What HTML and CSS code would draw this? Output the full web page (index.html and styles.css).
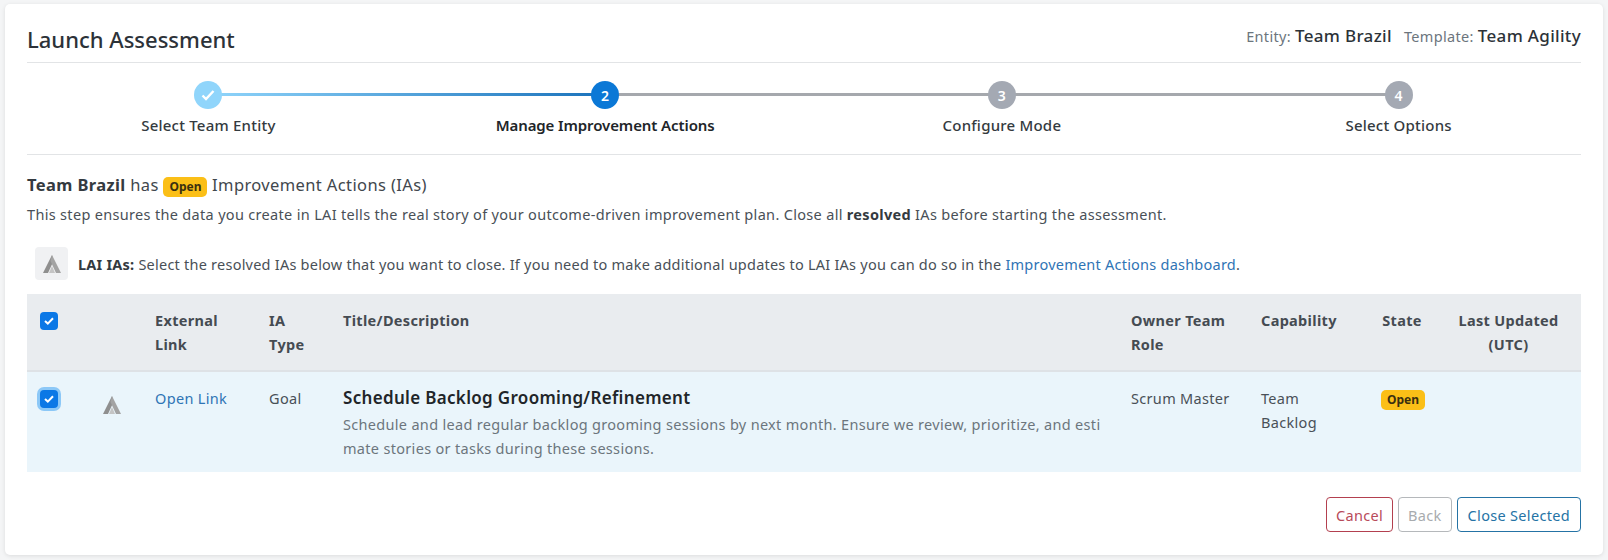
FILE: index.html
```html
<!DOCTYPE html>
<html lang="en">
<head>
  <meta charset="UTF-8">
  <title>Launch Assessment</title>
  <link rel="stylesheet" href="styles.css">
</head>
<body>
  <div class="card">
    <!-- Header -->
    <div class="card-header">
      <h1>Launch Assessment</h1>
      <div class="meta">
        <span class="meta-label">Entity:</span> <span class="meta-value">Team Brazil</span>
        <span class="meta-label meta-gap">Template:</span> <span class="meta-value">Team Agility</span>
      </div>
    </div>

    <!-- Stepper -->
    <div class="stepper">
      <div class="step done">
        <div class="step-circle">
          <svg width="14" height="12" viewBox="0 0 14 12"><path d="M1.5 6.5 L5 10 L12.5 2" fill="none" stroke="#fff" stroke-width="2.4"/></svg>
        </div>
        <div class="step-label">Select Team Entity</div>
      </div>
      <div class="step active">
        <div class="step-circle">2</div>
        <div class="step-label">Manage Improvement Actions</div>
      </div>
      <div class="step">
        <div class="step-circle">3</div>
        <div class="step-label">Configure Mode</div>
      </div>
      <div class="step">
        <div class="step-circle">4</div>
        <div class="step-label">Select Options</div>
      </div>
    </div>

    <!-- Intro -->
    <h2 class="intro-title"><b>Team Brazil</b> has <span class="badge">Open</span> Improvement Actions (IAs)</h2>
    <p class="intro-text">This step ensures the data you create in LAI tells the real story of your outcome-driven improvement plan. Close all <b>resolved</b> IAs before starting the assessment.</p>

    <div class="note">
      <div class="logo-box">
        <svg class="logo" width="18" height="18" viewBox="0 0 18 18"><path d="M9 0 L0 18 H5 L10.5 6 Z" fill="#8f8f8f"/><path d="M9 0 L18 18 H13 L7.5 6 Z" fill="#a3a3a3"/><path d="M9 11 L12 18 H6 Z" fill="#c4c4c4"/></svg>
      </div>
      <div><b>LAI IAs:</b> Select the resolved IAs below that you want to close. If you need to make additional updates to LAI IAs you can do so in the <a href="#">Improvement Actions dashboard</a>.</div>
    </div>

    <!-- Table -->
    <table class="ia-table">
      <colgroup>
        <col class="col-check"><col class="col-logo"><col class="col-link"><col class="col-type"><col class="col-title"><col class="col-owner"><col class="col-cap"><col class="col-state"><col class="col-updated">
      </colgroup>
      <thead>
        <tr>
          <th><span class="checkbox"><svg width="10" height="8" viewBox="0 0 10 8"><path d="M1 4 L3.8 6.6 L9 1.2" fill="none" stroke="#fff" stroke-width="2"/></svg></span></th>
          <th></th>
          <th>External Link</th>
          <th>IA Type</th>
          <th>Title/Description</th>
          <th>Owner Team Role</th>
          <th>Capability</th>
          <th class="center">State</th>
          <th class="center">Last Updated (UTC)</th>
        </tr>
      </thead>
      <tbody>
        <tr>
          <td><span class="checkbox focused"><svg width="10" height="8" viewBox="0 0 10 8"><path d="M1 4 L3.8 6.6 L9 1.2" fill="none" stroke="#fff" stroke-width="2"/></svg></span></td>
          <td class="logo-cell"><svg class="logo" width="18" height="18" viewBox="0 0 18 18"><path d="M9 0 L0 18 H5 L10.5 6 Z" fill="#8f8f8f"/><path d="M9 0 L18 18 H13 L7.5 6 Z" fill="#a3a3a3"/><path d="M9 11 L12 18 H6 Z" fill="#c4c4c4"/></svg></td>
          <td><a href="#">Open Link</a></td>
          <td>Goal</td>
          <td>
            <div class="ia-title">Schedule Backlog Grooming/Refinement</div>
            <div class="ia-desc">Schedule and lead regular backlog grooming sessions by next month. Ensure we review, prioritize, and esti<br>mate stories or tasks during these sessions.</div>
          </td>
          <td>Scrum Master</td>
          <td>Team<br>Backlog</td>
          <td class="center"><span class="badge">Open</span></td>
          <td></td>
        </tr>
      </tbody>
    </table>

    <div class="actions">
      <button class="btn btn-cancel">Cancel</button>
      <button class="btn btn-back">Back</button>
      <button class="btn btn-close">Close Selected</button>
    </div>
  </div>
</body>
</html>
```

FILE: styles.css
```css
* {
  margin: 0;
  padding: 0;
  box-sizing: border-box;
  font-family: 'Noto Sans', 'Open Sans', sans-serif;
}

body {
  background: #f4f5f6;
  height: 560px;
  overflow: hidden;
  padding: 4px 5px;
  color: #495057;
  font-size: 14.5px;
  letter-spacing: 0.32px;
}

.card {
  background: #fff;
  height: 551px;
  border-radius: 5px;
  padding: 0 22px;
  box-shadow: 0 1px 4px rgba(0, 0, 0, 0.1);
}

.card-header {
  height: 59px;
  display: flex;
  justify-content: space-between;
  align-items: flex-end;
  padding-bottom: 8px;
  border-bottom: 1px solid #e2e4e6;
}

h1 {
  font-size: 22px;
  font-weight: 500;
  color: #2c3238;
  line-height: 30px;
  letter-spacing: 0;
}

.meta {
  line-height: 30px;
  position: relative;
  top: -3px;
}

.meta-label {
  color: #6c757d;
  font-size: 14.5px;
}

.meta-gap {
  margin-left: 8px;
}

.meta-value {
  font-size: 17px;
  font-weight: 500;
  color: #2c3238;
}

.stepper {
  display: flex;
  margin: 0 -16px 0 -17px;
  height: 92px;
  padding-top: 18px;
  position: relative;
}

.stepper::after {
  content: '';
  position: absolute;
  left: 17px;
  right: 16px;
  bottom: 0;
  height: 1px;
  background: #e2e4e6;
}

.step {
  flex: 1;
  display: flex;
  flex-direction: column;
  align-items: center;
  position: relative;
}

.step-circle {
  width: 28px;
  height: 28px;
  border-radius: 50%;
  background: #a4a9b3;
  color: #fff;
  font-size: 14px;
  font-weight: 600;
  display: flex;
  align-items: center;
  justify-content: center;
  z-index: 1;
}

.step-label {
  margin-top: 6px;
  font-size: 15px;
  font-weight: 500;
  letter-spacing: 0.22px;
  color: #343a40;
  line-height: 20px;
}

.step:not(:last-child)::after {
  content: '';
  position: absolute;
  top: 12px;
  left: 50%;
  width: 100%;
  height: 3px;
  background: #a5a8ad;
}

.step.done .step-circle {
  background: #90d5fb;
}

.step.done::after {
  background: linear-gradient(90deg, #90d5fb, #1a72bb);
}

.step.active .step-circle {
  background: #0b78d6;
}

.step.active .step-label {
  font-weight: 600;
  letter-spacing: -0.1px;
  color: #212529;
}

.intro-title {
  margin-top: 18px;
  font-size: 16.5px;
  font-weight: 400;
  line-height: 24px;
  letter-spacing: 0.38px;
  color: #41474d;
}

.intro-title b {
  font-weight: 700;
  color: #343a40;
}

.badge {
  display: inline-block;
  background: #fbbf17;
  color: #3a2f10;
  font-size: 12px;
  font-weight: 700;
  line-height: 20px;
  padding: 0 6px;
  border-radius: 5px;
  letter-spacing: 0;
}

.intro-text {
  margin-top: 7px;
  line-height: 20px;
}

.intro-text b, .note b {
  color: #343a40;
}

.note {
  display: flex;
  align-items: center;
  gap: 10px;
  margin: 23px 0 14px 8px;
  letter-spacing: 0.23px;
}

.note a, .ia-table a {
  color: #2f74b5;
  text-decoration: none;
}

.logo-box {
  width: 33px;
  height: 33px;
  background: #f0f1f3;
  border-radius: 4px;
  display: flex;
  align-items: center;
  justify-content: center;
}

.ia-table {
  width: 100%;
  table-layout: fixed;
  border-collapse: collapse;
}

.col-check { width: 58px; }
.col-logo { width: 57px; }
.col-link { width: 114px; }
.col-type { width: 74px; }
.col-title { width: 788px; }
.col-owner { width: 130px; }
.col-cap { width: 120px; }
.col-state { width: 68px; }

.ia-table th {
  background: #e9ecef;
  border-bottom: 2px solid #dee2e6;
  text-align: left;
  vertical-align: top;
  font-size: 14.5px;
  font-weight: 700;
  color: #454b52;
  line-height: 24px;
  height: 76px;
  padding: 14px 13px;
}

.ia-table td {
  background: #eaf5fb;
  vertical-align: top;
  line-height: 24px;
  height: 101px;
  padding: 14px 13px 10px;
}

.ia-table .center {
  text-align: center;
}

.checkbox {
  width: 18px;
  height: 18px;
  background: #0b78e6;
  border-radius: 4px;
  display: flex;
  align-items: center;
  justify-content: center;
  margin-top: 4px;
}

.ia-table .logo-cell {
  padding-left: 18px;
  padding-top: 24px;
}

.checkbox.focused {
  box-shadow: 0 0 0 3px #8cc8f7;
  margin-top: 4px;
}

.ia-title {
  margin-top: 1px;
  font-size: 17px;
  font-weight: 600;
  color: #212529;
  line-height: 22px;
}

.ia-desc {
  margin-top: 3px;
  font-size: 14.5px;
  letter-spacing: 0.31px;
  color: #6c757d;
  line-height: 24px;
}

.actions {
  display: flex;
  justify-content: flex-end;
  gap: 5px;
  margin-top: 25px;
}

.btn {
  background: #fff;
  border: 1px solid;
  border-radius: 4px;
  font-size: 14.5px;
  letter-spacing: 0.32px;
  height: 35px;
  padding: 0 9px;
}

.btn-cancel {
  border-color: #b3404f;
  color: #b84a5a;
}

.btn-back {
  border-color: #b5b8bb;
  color: #a8abae;
}

.btn-close {
  border-color: #2573a5;
  color: #2573a5;
  padding: 0 10px;
}
```
